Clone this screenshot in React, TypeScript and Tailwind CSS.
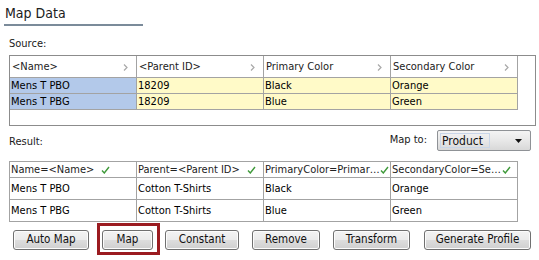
import type { ReactNode } from 'react'

const sourceCols = ['<Name>', '<Parent ID>', 'Primary Color', 'Secondary Color']
const sourceRows = [
  ['Mens T PBO', '18209', 'Black', 'Orange'],
  ['Mens T PBG', '18209', 'Blue', 'Green'],
]
// truncated headers keep the check pinned to the right edge
const resultCols = [
  { label: 'Name=<Name>', cut: false },
  { label: 'Parent=<Parent ID>', cut: false },
  { label: 'PrimaryColor=Primar…', cut: true },
  { label: 'SecondaryColor=Se…', cut: true },
]
const resultRows = [
  ['Mens T PBO', 'Cotton T-Shirts', 'Black', 'Orange'],
  ['Mens T PBG', 'Cotton T-Shirts', 'Blue', 'Green'],
]

function Check() {
  return (
    <svg width="9" height="8" viewBox="0 0 9 8" className="shrink-0">
      <path d="M1 4.5 L3.3 7 L8 1" fill="none" stroke="#3f9a3a" strokeWidth="1.4" />
    </svg>
  )
}

function Chevron() {
  return (
    <svg width="5" height="7" viewBox="0 0 5 7" className="shrink-0">
      <path d="M1 0.5 L4 3.5 L1 6.5" fill="none" stroke="#a8a8a8" strokeWidth="1.2" />
    </svg>
  )
}

function Button({ children, className }: { children: ReactNode; className: string }) {
  return (
    <div
      className={`flex h-[20px] items-center justify-center rounded-[3px] border border-[#707070] bg-[linear-gradient(#f3f3f3_0%,#ebebeb_48%,#dddddd_52%,#cfcfcf_100%)] text-[11.5px] text-[#111] shadow-[inset_0_0_0_1px_#fcfcfc] ${className}`}
    >
      {children}
    </div>
  )
}

export default function App() {
  return (
    <div className="h-[260px] w-[539px] overflow-hidden bg-white font-['DejaVu_Sans_Condensed','DejaVu_Sans',sans-serif] text-[11px] text-black">
      <div className="pl-[5px] pt-[4px] text-[14px] leading-[18px] text-[#202020]">Map Data</div>
      <div className="ml-[4px] mt-[2px] h-[2px] w-[139px] bg-[#7b8b9a]" />

      <div className="ml-[9px] mt-[11px] leading-[13px] text-[#1a1a1a]">Source:</div>

      <div className="ml-[9px] mt-[5px] h-[71px] w-[527px] border border-[#8c8c8c] bg-white">
        <div className="flex">
          {sourceCols.map(c => (
            <div
              key={c}
              className="flex h-[22px] w-[127px] items-center justify-between border-b border-r border-[#a3a3a3] pl-[2px] pr-[8px] pt-[1px] text-[#222]"
            >
              <span>{c}</span>
              <Chevron />
            </div>
          ))}
        </div>
        {sourceRows.map(r => (
          <div key={r[0]} className="flex">
            {r.map((v, i) => (
              <div
                key={i}
                className={`flex h-[16px] w-[127px] items-center border-b border-r border-[#a3a3a3] pl-[1px] leading-none ${
                  i === 0 ? 'bg-[#b3c9ea]' : 'bg-[#fffac8]'
                }`}
              >
                {v}
              </div>
            ))}
          </div>
        ))}
      </div>

      <div className="mt-[4px] flex h-[21px] items-center pr-[8px]">
        <div className="ml-[9px] mt-[4px] text-[#1a1a1a]">Result:</div>
        <div className="ml-auto mr-[10px] text-[#1a1a1a]">Map to:</div>
        <div className="flex h-[21px] w-[94px] items-center justify-between rounded-[2px] border border-[#8f9296] bg-[linear-gradient(#f4f4f4,#e8e8e8_50%,#d8d8d8)] pl-[2px] pr-[8px]">
          <span className="flex h-[15px] items-center border border-[#c9d6e8] pl-[1px] pr-[6px] text-[12px] text-[#111]">
            Product
          </span>
          <svg width="7" height="4" viewBox="0 0 7 4">
            <path d="M0 0 H7 L3.5 4 Z" fill="#111" />
          </svg>
        </div>
      </div>

      <div className="ml-[9px] mt-[10px] w-[509px] border-l border-t border-[#a3a3a3]">
        <div className="flex">
          {resultCols.map(c => (
            <div
              key={c.label}
              className={`flex h-[16px] w-[127px] items-center border-b border-r border-[#a3a3a3] pl-[1px] pr-[6px] leading-none text-[#222] ${
                c.cut ? 'justify-between' : 'gap-[7px]'
              }`}
            >
              <span className="whitespace-nowrap">{c.label}</span>
              <Check />
            </div>
          ))}
        </div>
        {resultRows.map(r => (
          <div key={r[0]} className="flex">
            {r.map((v, i) => (
              <div
                key={i}
                className="flex h-[22px] w-[127px] items-center border-b border-r border-[#a3a3a3] pl-[1px] leading-none"
              >
                {v}
              </div>
            ))}
          </div>
        ))}
      </div>

      <div className="mt-[8px] flex">
        <Button className="ml-[13px] w-[76px]">Auto Map</Button>
        <div className="relative ml-[13px]">
          <Button className="w-[51px]">Map</Button>
          <div className="pointer-events-none absolute -bottom-[5px] -left-[5px] -right-[7px] -top-[7px] border-[3px] border-[#9b1b20]" />
        </div>
        <Button className="ml-[12px] w-[74px]">Constant</Button>
        <Button className="ml-[13px] w-[68px]">Remove</Button>
        <Button className="ml-[13px] w-[77px]">Transform</Button>
        <Button className="ml-[14px] w-[107px]">Generate Profile</Button>
      </div>
    </div>
  )
}
